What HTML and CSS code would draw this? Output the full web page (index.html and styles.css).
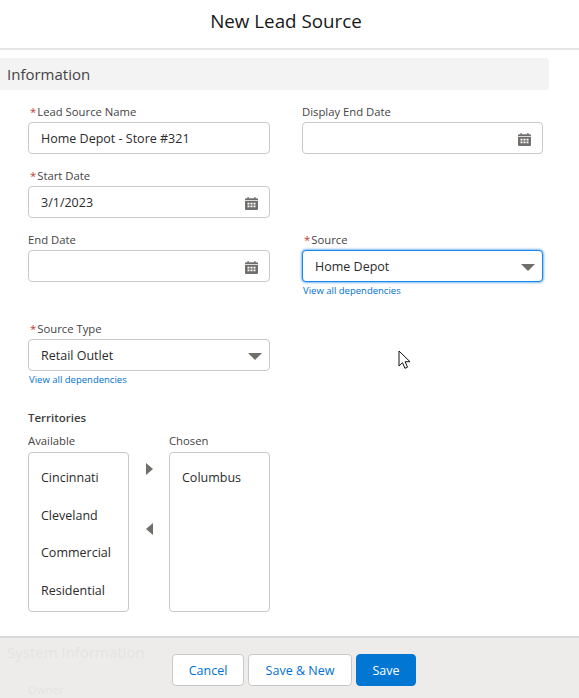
FILE: index.html
```html
<!DOCTYPE html>
<html lang="en">
<head>
<meta charset="utf-8">
<title>New Lead Source</title>
<link rel="stylesheet" href="styles.css">
</head>
<body>
<div class="modal">
  <header class="modal-header"><h1>New Lead Source</h1></header>
  <main class="modal-body">
    <h2 class="section-title">Information</h2>
    <div class="form-grid">
      <div class="field">
        <label class="field-label"><span class="req">*</span>Lead Source Name</label>
        <div class="control"><span class="value">Home Depot - Store #321</span></div>
      </div>
      <div class="field">
        <label class="field-label">Display End Date</label>
        <div class="control">
          <svg class="cal" viewBox="0 0 13 13"><path fill-rule="evenodd" d="M2.5 0h1.200v1.200h5.600V0h1.200v1.200h1.200c.7 0 1.300.6 1.300 1.300v.7H0v-.7c0-.7.6-1.300 1.300-1.300h1.200zM0 4h13v7.700c0 .7-.6 1.300-1.300 1.300H1.300C.6 13 0 12.400 0 11.700zM2.500 5.800v1.700h2V5.800zm3 0v1.700h2V5.800zm3 0v1.700h2V5.800zm-6 2.700v1.700h2V8.500zm3 0v1.700h2V8.500zm3 0v1.700h2V8.500z"/></svg>
        </div>
      </div>
      <div class="field">
        <label class="field-label"><span class="req">*</span>Start Date</label>
        <div class="control"><span class="value">3/1/2023</span>
          <svg class="cal" viewBox="0 0 13 13"><path fill-rule="evenodd" d="M2.5 0h1.200v1.200h5.600V0h1.200v1.200h1.200c.7 0 1.300.6 1.300 1.300v.7H0v-.7c0-.7.6-1.300 1.300-1.300h1.200zM0 4h13v7.700c0 .7-.6 1.300-1.300 1.300H1.300C.6 13 0 12.400 0 11.700zM2.500 5.800v1.700h2V5.800zm3 0v1.700h2V5.800zm3 0v1.700h2V5.800zm-6 2.700v1.700h2V8.500zm3 0v1.700h2V8.500zm3 0v1.700h2V8.500z"/></svg>
        </div>
      </div>
      <div class="field"></div>
      <div class="field">
        <label class="field-label">End Date</label>
        <div class="control">
          <svg class="cal" viewBox="0 0 13 13"><path fill-rule="evenodd" d="M2.5 0h1.200v1.200h5.600V0h1.200v1.200h1.200c.7 0 1.300.6 1.300 1.300v.7H0v-.7c0-.7.6-1.300 1.300-1.300h1.200zM0 4h13v7.700c0 .7-.6 1.300-1.300 1.300H1.300C.6 13 0 12.400 0 11.700zM2.500 5.800v1.700h2V5.800zm3 0v1.700h2V5.800zm3 0v1.700h2V5.800zm-6 2.700v1.700h2V8.500zm3 0v1.700h2V8.500zm3 0v1.700h2V8.500z"/></svg>
        </div>
      </div>
      <div class="field field-dep">
        <label class="field-label"><span class="req">*</span>Source</label>
        <div class="control control-focus"><span class="value">Home Depot</span><span class="caret"></span></div>
        <a class="dep-link">View all dependencies</a>
      </div>
      <div class="field field-dep">
        <label class="field-label"><span class="req">*</span>Source Type</label>
        <div class="control"><span class="value">Retail Outlet</span><span class="caret"></span></div>
        <a class="dep-link">View all dependencies</a>
      </div>
      <div class="field"></div>
    </div>
    <div class="dual">
      <div class="dual-title">Territories</div>
      <div class="dual-row">
        <div class="dual-col">
          <div class="field-label">Available</div>
          <ul class="list">
            <li>Cincinnati</li>
            <li>Cleveland</li>
            <li>Commercial</li>
            <li>Residential</li>
          </ul>
        </div>
        <div class="dual-arrows">
          <span class="arrow arrow-right"></span>
          <span class="arrow arrow-left"></span>
        </div>
        <div class="dual-col">
          <div class="field-label">Chosen</div>
          <ul class="list"><li>Columbus</li></ul>
        </div>
      </div>
    </div>
    <h2 class="section-title section-next">System Information</h2>
    <div class="form-grid">
      <div class="field"><label class="field-label">Owner</label></div>
    </div>
  </main>
  <footer class="modal-footer">
    <button class="btn btn-cancel">Cancel</button>
    <button class="btn btn-new">Save &amp; New</button>
    <button class="btn btn-brand">Save</button>
  </footer>
  <svg class="cursor" viewBox="0 0 14 20"><path d="M1 1v15l3.500-3.300 2.400 5.600 2.600-1.100-2.400-5.500h4.900z" fill="#fff" stroke="#111" stroke-width="1"/></svg>
</div>
</body>
</html>
```
FILE: styles.css
```css
* { box-sizing: border-box; }
html, body { margin: 0; padding: 0; }
body { font-family: "Open Sans", "Noto Sans", sans-serif; color: #3e3e3c; background: #fff; }
.modal { position: relative; width: 579px; height: 698px; overflow: hidden; background: #fff; }
.modal-header { height: 50px; border-bottom: 2px solid #e5e5e5; display: flex; align-items: center; justify-content: center; padding-right: 7px; }
.modal-header h1 { margin: 0 0 6px; font-size: 18.800px; font-weight: 400; color: #181818; }
.modal-body { padding-top: 8px; }
.section-title { margin: 0; width: 549px; height: 32px; padding-left: 7px; line-height: 32px; font-size: 15px; font-weight: 400; color: #444; background: #f3f3f3; border-radius: 0 4px 4px 0; }
.section-next { margin-top: 24px; }
.form-grid { display: grid; grid-template-columns: 242px 241px; column-gap: 32px; padding: 12px 0 0 28px; }
.field { height: 64px; }
.field-dep { height: 89px; }
.field-label { display: block; height: 20px; line-height: 20px; font-size: 11.300px; color: #444; }
.req { color: #c23934; margin: 0 1px 0 2px; }
.control { position: relative; height: 32px; display: flex; align-items: center; justify-content: space-between; padding: 0 11px 0 12px; background: #fff; border: 1px solid #c9c9c9; border-radius: 4px; font-size: 12.500px; color: #2b2b2b; }
.control-focus { border-color: #1589ee; box-shadow: 0 0 3px #0070d2; }
.cal { width: 13px; height: 13px; fill: #706e6b; margin: 3px 0 0 auto; }
.caret { width: 0; height: 0; margin-left: auto; border-left: 7px solid transparent; border-right: 7px solid transparent; border-top: 7px solid #706e6b; margin-right: -4px; margin-top: 2px; }
.dep-link { display: block; margin: 2px 0 0 1px; font-size: 9.500px; line-height: 14px; color: #0070d2; }
.dual { margin: 0 0 0 28px; }
.dual-title { height: 20px; line-height: 20px; font-size: 11.500px; font-weight: 600; color: #3e3e3c; margin-bottom: 7px; }
.dual-row { display: flex; }
.dual-col { width: 101px; }
.dual-col .field-label { height: 11px; line-height: 11px; margin-bottom: 6px; }
.dual-arrows { width: 40px; padding-top: 28px; display: flex; flex-direction: column; align-items: center; gap: 48px; }
.arrow { width: 0; height: 0; border-top: 6px solid transparent; border-bottom: 6px solid transparent; }
.arrow-right { border-left: 7px solid #706e6b; }
.arrow-left { border-right: 7px solid #706e6b; }
.list { margin: 0; padding: 6px 0 0 12px; list-style: none; height: 160px; border: 1px solid #c9c9c9; border-radius: 4px; background: #fff; font-size: 12.500px; color: #2b2b2b; }
.list li { height: 37.600px; line-height: 37.600px; }
.modal-footer { position: absolute; left: 0; right: 0; bottom: 0; height: 62px; padding: 16px 163px 0 0; display: flex; justify-content: flex-end; gap: 4px; background: rgba(236, 235, 234, 0.95); border-top: 2px solid #d8d8d8; }
.btn { height: 32px; padding: 0; font-family: inherit; font-size: 12.500px; color: #0070d2; background: #fff; border: 1px solid #c9c9c9; border-radius: 4px; }
.btn-cancel { width: 72px; }
.btn-new { width: 104px; }
.btn-brand { width: 60px; background: #0176d3; border-color: #0176d3; color: #fff; }
.cursor { position: absolute; left: 398px; top: 350px; width: 14px; height: 20px; }
```
